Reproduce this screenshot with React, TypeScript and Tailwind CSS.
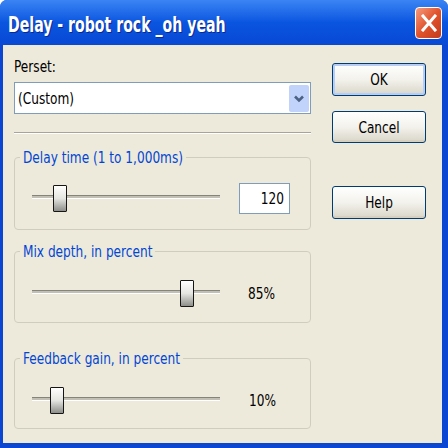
import React from 'react';

// the dialog text is tall and narrow: a smaller size stretched up keeps layout widths right
const T = ({ children }: { children: React.ReactNode }) => (
  <span className="inline-block scale-y-[1.185]">{children}</span>
);

const Thumb = ({ left }: { left: number }) => (
  <div
    className="absolute top-0 h-[27px] w-[14px] rounded-[1px] border border-[#161616] bg-linear-to-b from-white via-[#e4e4e0] to-[#8e8e8a]"
    style={{ left }}
  />
);

const Slider = ({ pos }: { pos: number }) => (
  <div className="relative h-[27px] w-[188px] shrink-0">
    <div className="mt-[10px] h-[4px] w-full border-t border-b border-t-[#85847b] border-b-white bg-[#c2c0b4]" />
    <Thumb left={pos} />
  </div>
);

const Group = ({ label, className, children }: { label: string; className: string; children: React.ReactNode }) => (
  <fieldset className={'rounded-[4px] border border-[#cfcdbd] ' + className}>
    <legend className="ml-[5px] px-[3px] text-[13.5px] leading-[18px] text-[#0046d5]">
      <T>{label}</T>
    </legend>
    {children}
  </fieldset>
);

const XpButton = ({ label, isDefault, className }: { label: string; isDefault?: boolean; className: string }) => (
  <button
    className={
      'w-[94px] rounded-[3px] border border-[#003c74] bg-linear-to-b from-white via-[#f3f2ec] to-[#d9d5c8] text-[13.5px] text-black ' +
      (isDefault ? 'shadow-[inset_0_0_0_2px_#b7cdf5] ' : 'shadow-[inset_0_-2px_0_#d6d0c0] ') +
      className
    }
  >
    <T>{label}</T>
  </button>
);

const App: React.FC = () => {
  return (
    <div className="flex h-[448px] w-[448px] flex-col overflow-hidden rounded-t-[7px] bg-[#0b46d2] pb-[5px] pl-[3px] pr-[6px] font-['DejaVu_Sans_Condensed','Liberation_Sans',sans-serif]">
      {/* title bar */}
      <div className="-ml-[3px] -mr-[6px] flex h-[45px] shrink-0 items-center justify-between bg-linear-to-b from-[#3a84f4] via-[#0a55e0] to-[#0848d4] pl-[8px] pr-[6px]">
        <span className="mt-[4px] inline-block scale-y-[1.4] text-[15.7px] font-bold leading-none text-white [text-shadow:1px_1px_0_#0a2a90]">
          Delay - robot rock _oh yeah
        </span>
        <div className="flex h-[32px] w-[27px] items-center justify-center rounded-[4px] border border-white bg-linear-to-br from-[#f39a7c] via-[#e0532c] to-[#c3391b]">
          <svg width="16" height="18" viewBox="0 0 16 18">
            <path d="M2 2 L14 16 M14 2 L2 16" stroke="white" strokeWidth="3" strokeLinecap="square" />
          </svg>
        </div>
      </div>

      {/* body */}
      <div className="flex flex-1 bg-[#eeeadb] pl-[11px]">
        <div className="flex w-[297px] flex-col">
          <div className="mt-[12px] text-[13.5px] leading-[18px] text-black">
            <T>Perset:</T>
          </div>
          <div className="mt-[7px] flex h-[32px] items-center justify-between border border-[#7f9db9] bg-white pl-[3px] pr-[1px]">
            <span className="text-[13.5px] text-black">
              <T>(Custom)</T>
            </span>
            <div className="flex h-[27px] w-[20px] items-center justify-center rounded-[2px] bg-[#c1d3fb]">
              <svg width="12" height="9" viewBox="0 0 12 9">
                <path d="M2 2.5 L6 6.5 L10 2.5" fill="none" stroke="#4d6185" strokeWidth="2.6" />
              </svg>
            </div>
          </div>
          <div className="mt-[18px] h-[2px] border-t border-b border-t-[#a7a597] border-b-white" />

          <Group label="Delay time (1 to 1,000ms)" className="mt-[14px] h-[82px]">
            <div className="mt-[17px] flex items-center pl-[17px]">
              <Slider pos={21} />
              <div className="ml-[19px] flex h-[31px] w-[51px] items-center justify-end border border-[#7f9db9] bg-white pr-[5px] text-[13.5px] text-black">
                <T>120</T>
              </div>
            </div>
          </Group>

          <Group label="Mix depth, in percent" className="mt-[12px] h-[81px]">
            <div className="mt-[20px] flex items-center pl-[17px]">
              <Slider pos={148} />
              <span className="ml-[28px] text-[13.5px] text-black">
                <T>85%</T>
              </span>
            </div>
          </Group>

          <Group label="Feedback gain, in percent" className="mt-[26px] h-[80px]">
            <div className="mt-[20px] flex items-center pl-[17px]">
              <Slider pos={18} />
              <span className="ml-[29px] text-[13.5px] text-black">
                <T>10%</T>
              </span>
            </div>
          </Group>
        </div>

        <div className="ml-[21px] flex flex-col">
          <XpButton label="OK" isDefault className="mt-[18px] h-[33px]" />
          <XpButton label="Cancel" className="mt-[15px] h-[32px]" />
          <XpButton label="Help" className="mt-[43px] h-[33px]" />
        </div>
      </div>
    </div>
  );
};

export default App;
